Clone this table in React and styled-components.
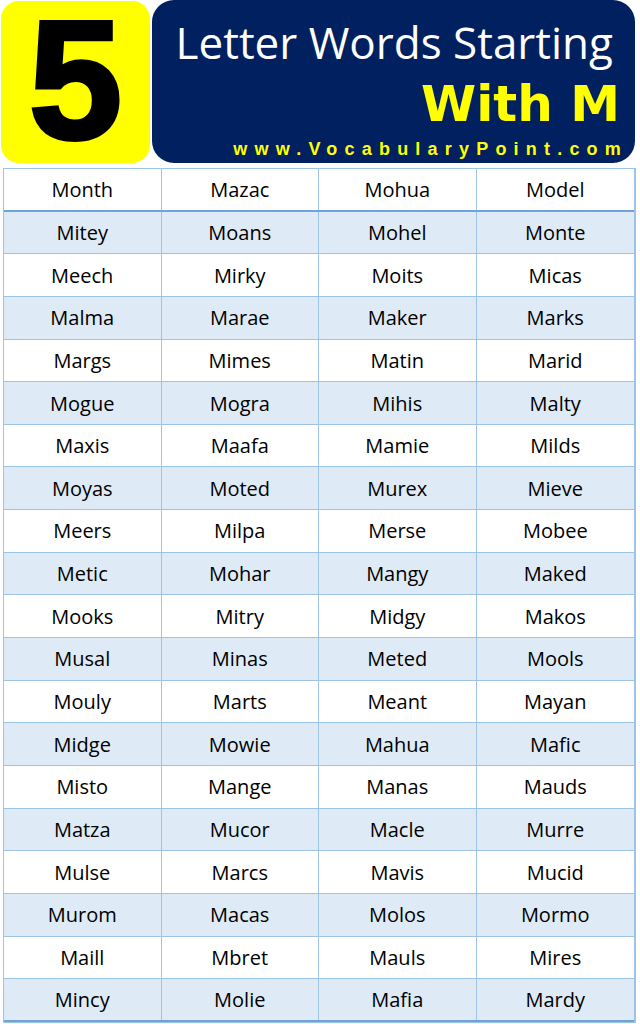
import React from "react";
import styled, { createGlobalStyle } from "styled-components";

const words = [
  ["Month", "Mazac", "Mohua", "Model"],
  ["Mitey", "Moans", "Mohel", "Monte"],
  ["Meech", "Mirky", "Moits", "Micas"],
  ["Malma", "Marae", "Maker", "Marks"],
  ["Margs", "Mimes", "Matin", "Marid"],
  ["Mogue", "Mogra", "Mihis", "Malty"],
  ["Maxis", "Maafa", "Mamie", "Milds"],
  ["Moyas", "Moted", "Murex", "Mieve"],
  ["Meers", "Milpa", "Merse", "Mobee"],
  ["Metic", "Mohar", "Mangy", "Maked"],
  ["Mooks", "Mitry", "Midgy", "Makos"],
  ["Musal", "Minas", "Meted", "Mools"],
  ["Mouly", "Marts", "Meant", "Mayan"],
  ["Midge", "Mowie", "Mahua", "Mafic"],
  ["Misto", "Mange", "Manas", "Mauds"],
  ["Matza", "Mucor", "Macle", "Murre"],
  ["Mulse", "Marcs", "Mavis", "Mucid"],
  ["Murom", "Macas", "Molos", "Mormo"],
  ["Maill", "Mbret", "Mauls", "Mires"],
  ["Mincy", "Molie", "Mafia", "Mardy"],
];

const App = () => {
  return (
    <Page>
      <GlobalStyle />
      <Banner>
        <NumberBox>
          <Digit>5</Digit>
        </NumberBox>
        <TitleBox>
          <Title>Letter Words Starting</Title>
          <Subtitle>With M</Subtitle>
          <Site>www.VocabularyPoint.com</Site>
        </TitleBox>
      </Banner>
      <Table>
        {words.map((row, i) => (
          <Row key={i} $shaded={i % 2 === 1} $first={i === 0}>
            {row.map((w) => (
              <Cell key={w}>{w}</Cell>
            ))}
          </Row>
        ))}
      </Table>
    </Page>
  );
};

export default App;

const GlobalStyle = createGlobalStyle`
  body {
    margin: 0;
    background: #ffffff;
    font-family: "Open Sans", "Liberation Sans", sans-serif;
  }
`;

const Page = styled.div`
  width: 640px;
  height: 1024px;
  overflow: hidden;
`;

const Banner = styled.div`
  display: flex;
  gap: 2px;
  height: 163px;
  padding: 1px 5px 0 1px;
  box-sizing: border-box;
`;

const NumberBox = styled.div`
  width: 149px;
  height: 162px;
  flex: none;
  background: #ffff00;
  border-radius: 18px;
  display: flex;
  align-items: center;
  justify-content: center;
  padding-bottom: 4px;
  box-sizing: border-box;
`;

const Digit = styled.span`
  font-family: "Liberation Sans", Arial, sans-serif;
  font-weight: 700;
  font-size: 168px;
  line-height: 150px;
  color: #000000;
  -webkit-text-stroke: 4px #000000;
`;

const TitleBox = styled.div`
  flex: 1;
  background: #002060;
  border-radius: 22px;
  margin-top: -1px;
  display: flex;
  flex-direction: column;
  align-items: flex-end;
  padding: 12px 14px 0 0;
  box-sizing: border-box;
`;

const Title = styled.div`
  font-family: "Open Sans", sans-serif;
  font-size: 44px;
  line-height: 60px;
  color: #ffffff;
  margin-right: 8px;
  white-space: nowrap;
`;

const Subtitle = styled.div`
  font-family: "DejaVu Sans", Verdana, sans-serif;
  font-weight: 700;
  font-size: 50px;
  line-height: 56px;
  color: #ffff00;
  margin-top: 4px;
  margin-right: 1px;
  white-space: nowrap;
`;

const Site = styled.div`
  font-family: "Liberation Sans", Arial, sans-serif;
  font-weight: 700;
  font-size: 18px;
  line-height: 20px;
  color: #ffff00;
  letter-spacing: 7.2px;
  margin-right: -7px;
  margin-top: 7px;
  white-space: nowrap;
`;

const Table = styled.div`
  margin: 5px 4px 0 3px;
  border: 1px solid #9dc3e6;
  border-right-width: 2px;
  display: flex;
  flex-direction: column;
`;

const Row = styled.div`
  display: grid;
  grid-template-columns: repeat(4, 1fr);
  height: 42.65px;
  box-sizing: border-box;
  background: ${(p) => (p.$shaded ? "#deeaf6" : "#ffffff")};
  border-bottom: ${(p) => (p.$first ? "2px solid #6fa3da" : "1px solid #9dc3e6")};
  &:last-child {
    border-bottom: 2px solid #6fa3da;
  }
`;

const Cell = styled.div`
  display: flex;
  align-items: center;
  justify-content: center;
  font-family: "Open Sans", sans-serif;
  font-size: 20px;
  color: #000000;
  border-right: 1px solid #9dc3e6;
  &:last-child {
    border-right: none;
  }
`;
